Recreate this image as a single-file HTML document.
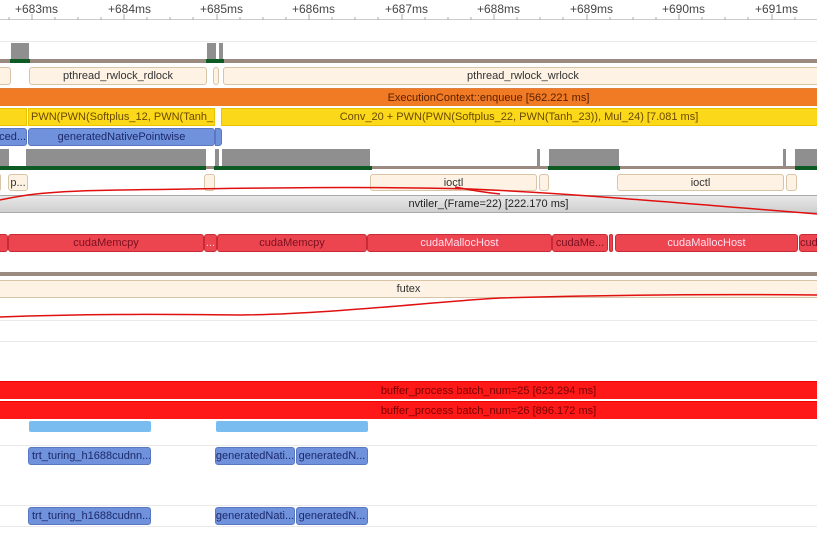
<!DOCTYPE html>
<html><head><meta charset="utf-8"><style>
body{margin:0;width:817px;height:544px;background:#fff;position:relative;overflow:hidden;font-family:"Liberation Sans",sans-serif;font-size:11px}
.a{position:absolute;box-sizing:border-box}
.t{display:flex;align-items:center;justify-content:center;white-space:nowrap;overflow:hidden}
.p{background:#fdf2e4;border:1px solid #d8c4a6;border-radius:3px;color:#333}
.y{background:#fcd81a;border:1px solid #e9c200;color:#6a4a00}
.b{background:#7091dc;border:1px solid #5a78c0;border-radius:3px;color:#1c2a6a}
.r{background:#ec4550;border:1px solid #c92a35;border-radius:3px;color:#fde}
.g{background:#8f8f8f}
.gr{background:#0d5a22}
.hl{background:#eaeaea;height:1px}
</style></head><body>
<div class="a" style="left:0;top:19px;width:817px;height:1px;background:#ccc"></div>
<svg class="a" style="left:0;top:0" width="817" height="20">
<g stroke="#aaa" stroke-width="1">
<path d="M32 14V20M124 14V20M217 14V20M309 14V20M402 14V20M494 14V20M587 14V20M679 14V20M772 14V20"/>
<path d="M9 17V20M55 17V20M78 17V20M101 17V20M147 17V20M170 17V20M193 17V20M240 17V20M263 17V20M286 17V20M332 17V20M355 17V20M378 17V20M425 17V20M448 17V20M471 17V20M517 17V20M540 17V20M563 17V20M610 17V20M633 17V20M656 17V20M702 17V20M725 17V20M748 17V20M795 17V20"/>
</g>
<g font-size="12" fill="#444" font-family="Liberation Sans,sans-serif">
<text x="15" y="13">+683ms</text><text x="108" y="13">+684ms</text><text x="200" y="13">+685ms</text><text x="292" y="13">+686ms</text><text x="385" y="13">+687ms</text><text x="477" y="13">+688ms</text><text x="570" y="13">+689ms</text><text x="662" y="13">+690ms</text><text x="755" y="13">+691ms</text>
</g></svg>
<div class="a hl" style="left:0;top:41px;width:817px"></div>
<div class="a g" style="left:11px;top:43px;width:18px;height:16px"></div>
<div class="a g" style="left:207px;top:43px;width:9px;height:16px"></div>
<div class="a g" style="left:219px;top:43px;width:4px;height:16px"></div>
<div class="a" style="left:0;top:59px;width:817px;height:4px;background:#9a8a80"></div>
<div class="a gr" style="left:10px;top:59px;width:20px;height:4px"></div>
<div class="a gr" style="left:206px;top:59px;width:18px;height:4px"></div>
<div class="a p" style="left:-4px;top:67px;width:15px;height:18px"></div>
<div class="a p t" style="left:29px;top:67px;width:178px;height:18px">pthread_rwlock_rdlock</div>
<div class="a p" style="left:213px;top:67px;width:6px;height:18px"></div>
<div class="a p t" style="left:223px;top:67px;width:600px;height:18px">pthread_rwlock_wrlock</div>
<div class="a t" style="left:0;top:88px;width:817px;height:18px;background:#f17a24;border-top:1px solid #e08040;color:#5a2000;padding-left:160px">ExecutionContext::enqueue [562.221 ms]</div>
<div class="a y" style="left:-3px;top:108px;width:30px;height:18px"></div>
<div class="a y t" style="left:28px;top:108px;width:187px;height:18px;justify-content:flex-start;padding-left:2px">PWN(PWN(Softplus_12, PWN(Tanh_13...</div>
<div class="a y t" style="left:221px;top:108px;width:600px;height:18px;padding-right:4px">Conv_20 + PWN(PWN(Softplus_22, PWN(Tanh_23)), Mul_24) [7.081 ms]</div>
<div class="a b t" style="left:-3px;top:128px;width:30px;height:18px;justify-content:flex-end">ced...</div>
<div class="a b t" style="left:28px;top:128px;width:187px;height:18px">generatedNativePointwise</div>
<div class="a b" style="left:215px;top:128px;width:7px;height:18px;border-radius:0 3px 3px 0"></div>
<div class="a g" style="left:0;top:149px;width:9px;height:17px"></div>
<div class="a g" style="left:26px;top:149px;width:180px;height:17px"></div>
<div class="a g" style="left:215px;top:149px;width:4px;height:17px"></div>
<div class="a g" style="left:222px;top:149px;width:148px;height:17px"></div>
<div class="a g" style="left:537px;top:149px;width:3px;height:17px"></div>
<div class="a g" style="left:549px;top:149px;width:70px;height:17px"></div>
<div class="a g" style="left:783px;top:149px;width:3px;height:17px"></div>
<div class="a g" style="left:795px;top:149px;width:22px;height:17px"></div>
<div class="a" style="left:0;top:166px;width:817px;height:3px;background:#9a8a80"></div>
<div class="a gr" style="left:0;top:166px;width:206px;height:4px"></div>
<div class="a gr" style="left:214px;top:166px;width:158px;height:4px"></div>
<div class="a gr" style="left:548px;top:166px;width:72px;height:4px"></div>
<div class="a gr" style="left:795px;top:166px;width:22px;height:4px"></div>
<div class="a p" style="left:-3px;top:174px;width:4px;height:17px"></div>
<div class="a p t" style="left:8px;top:174px;width:20px;height:17px">p...</div>
<div class="a p" style="left:204px;top:174px;width:11px;height:17px"></div>
<div class="a p t" style="left:370px;top:174px;width:167px;height:17px">ioctl</div>
<div class="a p" style="left:539px;top:174px;width:10px;height:17px"></div>
<div class="a p t" style="left:617px;top:174px;width:167px;height:17px">ioctl</div>
<div class="a p" style="left:786px;top:174px;width:11px;height:17px"></div>
<div class="a t" style="left:0;top:195px;width:817px;height:18px;background:linear-gradient(#e8e8e8,#cfcfcf);border-top:1px solid #aaa;border-bottom:1px solid #aaa;color:#222;padding-left:160px">nvtiler_(Frame=22) [222.170 ms]</div>
<div class="a r" style="left:-4px;top:234px;width:12px;height:18px"></div>
<div class="a r t" style="left:8px;top:234px;width:196px;height:18px;color:#7a1020">cudaMemcpy</div>
<div class="a r t" style="left:204px;top:234px;width:13px;height:18px">...</div>
<div class="a r t" style="left:217px;top:234px;width:150px;height:18px;color:#7a1020">cudaMemcpy</div>
<div class="a r t" style="left:367px;top:234px;width:185px;height:18px">cudaMallocHost</div>
<div class="a r t" style="left:552px;top:234px;width:56px;height:18px;color:#7a1020">cudaMe...</div>
<div class="a r" style="left:609px;top:234px;width:4px;height:18px"></div>
<div class="a r t" style="left:615px;top:234px;width:183px;height:18px">cudaMallocHost</div>
<div class="a r t" style="left:799px;top:234px;width:24px;height:18px;justify-content:flex-start;color:#7a1020">cud</div>
<div class="a" style="left:0;top:272px;width:817px;height:4px;background:#9a8a80"></div>
<div class="a p t" style="left:-4px;top:280px;width:825px;height:18px;border-radius:0">futex</div>
<div class="a hl" style="left:0;top:320px;width:817px"></div>
<div class="a hl" style="left:0;top:341px;width:817px"></div>
<svg class="a" style="left:0;top:0" width="817" height="544">
<path d="M0 200 C20 196 40 191 120 190 C250 188 360 186 470 189 C560 193 620 198 817 214" stroke="#e01010" stroke-width="1.5" fill="none"/>
<path d="M455 187 C470 190 490 193 500 194" stroke="#e01010" stroke-width="1.5" fill="none"/>
<path d="M0 317 C80 314 150 314 240 315 C330 314 430 302 500 298 C600 295 700 294 817 295" stroke="#e01010" stroke-width="1.5" fill="none"/>
</svg>
<div class="a t" style="left:0;top:381px;width:817px;height:18px;background:#ff1818;border-top:1px solid #e00;color:#7a0000;padding-left:160px">buffer_process batch_num=25 [623.294 ms]</div>
<div class="a t" style="left:0;top:401px;width:817px;height:18px;background:#ff1818;border-top:1px solid #e00;color:#7a0000;padding-left:160px">buffer_process batch_num=26 [896.172 ms]</div>
<div class="a" style="left:29px;top:421px;width:122px;height:11px;background:#79bcf0;border-radius:2px"></div>
<div class="a" style="left:216px;top:421px;width:152px;height:11px;background:#79bcf0;border-radius:2px"></div>
<div class="a hl" style="left:0;top:445px;width:817px"></div>
<div class="a b t" style="left:28px;top:447px;width:123px;height:18px;justify-content:flex-start;padding-left:3px">trt_turing_h1688cudnn...</div>
<div class="a b t" style="left:215px;top:447px;width:80px;height:18px">generatedNati...</div>
<div class="a b t" style="left:296px;top:447px;width:72px;height:18px">generatedN...</div>
<div class="a hl" style="left:0;top:505px;width:817px"></div>
<div class="a b t" style="left:28px;top:507px;width:123px;height:18px;justify-content:flex-start;padding-left:3px">trt_turing_h1688cudnn...</div>
<div class="a b t" style="left:215px;top:507px;width:80px;height:18px">generatedNati...</div>
<div class="a b t" style="left:296px;top:507px;width:72px;height:18px">generatedN...</div>
<div class="a hl" style="left:0;top:526px;width:817px"></div>
</body></html>
